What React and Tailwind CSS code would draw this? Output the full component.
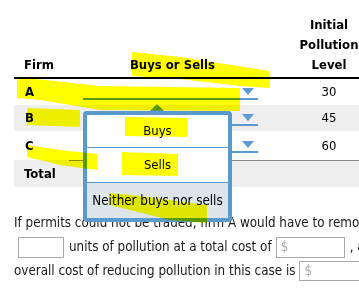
import React from 'react';

const cols = 'grid grid-cols-[55px_207px_106px]';

function Caret() {
    return (
        <svg width="12" height="7" viewBox="0 0 12 7" className="shrink-0">
            <polygon points="0,0 12,0 6,7" fill="#5b9bd1" />
        </svg>
    );
}

function Select({ mb }) {
    return (
        <div className={`self-end ml-[14px] w-[175px] h-[16px] border-b-2 border-[#5b9bd1] flex justify-end items-center pr-[4px] ${mb}`}>
            <Caret />
        </div>
    );
}

function Row({ firm, value, bg, h, mb }) {
    return (
        <div className={`${cols} ${h} ${bg}`}>
            <div className="pl-[11px] font-bold flex items-center">{firm}</div>
            <Select mb={mb} />
            <div className="flex items-center justify-center">{value}</div>
        </div>
    );
}

export default function App() {
    return (
        <div
            className="relative w-[359px] h-[292px] overflow-hidden bg-white text-[13px] text-black"
            style={{ fontFamily: '"DejaVu Sans Condensed", "DejaVu Sans", sans-serif' }}
        >
            <div className="ml-[14px] mt-[15px] w-[368px]">
                {/* header */}
                <div className={`${cols} items-end leading-[20px] font-bold pb-[2px] border-b-2 border-black`}>
                    <div className="pl-[10px]">Firm</div>
                    <div className="text-center">Buys or Sells</div>
                    <div className="text-center">
                        Initial
                        <br />
                        Pollution
                        <br />
                        Level
                    </div>
                </div>

                <Row firm="A" value="30" h="h-[26px]" bg="" mb="mb-[5px]" />
                <Row firm="B" value="45" h="h-[26px]" bg="bg-[#eeeeee]" mb="mb-[5px]" />
                <Row firm="C" value="60" h="h-[29px]" bg="" mb="mb-[7px]" />

                <div className={`${cols} h-[27px] bg-[#eeeeee]`}>
                    <div className="pl-[10px] font-bold flex items-center">Total</div>
                    <div className="border-t border-[#888888]" />
                    <div className="border-t border-[#888888]" />
                </div>
            </div>

            <div className="mt-[24px] pl-[14px] leading-[24px] whitespace-nowrap text-[13.3px] text-[#1a1a1a]">
                <div>If permits could not be traded, firm A would have to remove</div>
                <div className="flex items-center">
                    <span className="shrink-0 inline-block ml-[4px] mr-[5px] w-[46px] h-[21px] border border-[#aaaaaa]" />
                    <span className="shrink-0">units of pollution at a total cost of</span>
                    <span className="shrink-0 inline-flex items-center ml-[4px] mr-[5px] w-[69px] h-[21px] border border-[#aaaaaa] pl-[4px] text-[#aaaaaa]">$</span>
                    <span className="shrink-0">, and</span>
                </div>
                <div className="flex items-center">
                    <span className="shrink-0">overall cost of reducing pollution in this case is</span>
                    <span className="shrink-0 inline-flex items-center ml-[4px] w-[69px] h-[20px] border border-[#aaaaaa] pl-[4px] text-[#aaaaaa]">$</span>
                </div>
            </div>

            {/* open dropdown */}
            <div className="absolute left-[83px] top-[111px] w-[149px] h-[111px] border-4 border-[#5b98cb] rounded-[4px] bg-white flex flex-col">
                <svg width="14" height="7" viewBox="0 0 14 7" className="absolute left-[63px] -top-[11px]">
                    <polygon points="0,7 14,7 7,0" fill="#5b98cb" />
                </svg>
                <div className="h-[33px] flex items-center justify-center border-b border-[#5b98cb]">Buys</div>
                <div className="h-[35px] flex items-center justify-center border-b border-[#5b98cb]">Sells</div>
                <div className="flex-1 flex items-center justify-center bg-[#dde5ea] text-[13.3px]">Neither buys nor sells</div>
            </div>

            {/* highlighter marks */}
            <svg width="359" height="292" className="absolute left-0 top-0 pointer-events-none mix-blend-multiply">
                <g fill="#ffff00">
                    <polygon points="132,52 180,57 225,64 270,71 270,88 240,86 180,79 132,76" />
                    <polygon points="17,77 100,86 240,88 240,111 100,110 40,100 17,98" />
                    <polygon points="27,108 80,110 80,127 27,125" />
                    <polygon points="27,145 60,150 97,154 97,170 60,165 40,160 27,157" />
                    <polygon points="125,117 187,118 187,137 125,136" />
                    <polygon points="122,152 178,154 178,176 122,175" />
                    <polygon points="110,193 140,196 207,205 207,223 170,220 130,210 110,205" />
                </g>
            </svg>
        </div>
    );
}
